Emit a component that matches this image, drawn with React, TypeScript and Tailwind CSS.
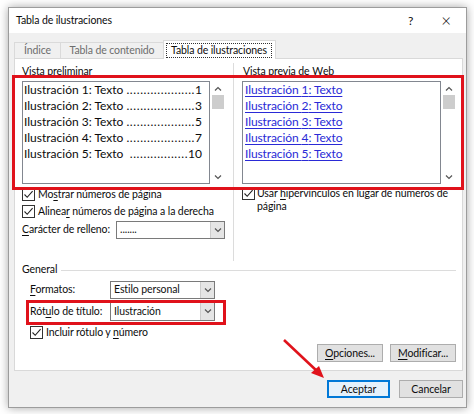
import React from 'react';

const font = { fontFamily: 'Lato, "Noto Sans", sans-serif' };

const Check = () => (
  <span className="w-[13px] h-[13px] border border-[#333333] bg-white flex items-center justify-center shrink-0">
    <svg width="11" height="11" viewBox="0 0 11 11">
      <path d="M1.5 5.5 L4.2 8.3 L9.6 2.2" fill="none" stroke="#222222" strokeWidth="1.1" />
    </svg>
  </span>
);

const Chevron = ({ up = false }: { up?: boolean }) => (
  <svg width="8" height="5" viewBox="0 0 8 5">
    <path d={up ? 'M1 4.5 L4 1.5 L7 4.5' : 'M1 0.5 L4 3.5 L7 0.5'} fill="none" stroke="#555555" strokeWidth="1.2" />
  </svg>
);

const Scrollbar = ({ w }: { w: string }) => (
  <div className={`${w} h-[103px] flex flex-col items-center`}>
    <div className="h-[14px] flex items-center justify-center">
      <Chevron up />
    </div>
    <div className="w-[12px] h-[14px] bg-[#cdcdcd]" />
    <div className="flex-1" />
    <div className="h-[14px] flex items-center justify-center">
      <Chevron />
    </div>
  </div>
);

const Select = ({ value, w, h }: { value: string; w: string; h: string }) => (
  <div className={`${w} ${h} border border-[#7a7a7a] bg-white flex items-stretch`}>
    <span className="flex-1 pl-[3px] flex items-center text-[#111111]">{value}</span>
    <span className="w-[14px] bg-[#e5e5e5] border-l border-[#cccccc] flex items-center justify-center">
      <Chevron />
    </span>
  </div>
);

const U = ({ children }: { children: React.ReactNode }) => <span className="underline underline-offset-2">{children}</span>;

const previews = [
  { n: 1, p: '1', dots: 20 },
  { n: 2, p: '3', dots: 20 },
  { n: 3, p: '5', dots: 20 },
  { n: 4, p: '7', dots: 20 },
  { n: 5, p: '10', dots: 17 },
];

export default function App() {
  return (
    <div
      className="relative w-[474px] h-[414px] bg-white overflow-hidden text-[#0c0c0c] text-[10.5px] tracking-[-0.1px] whitespace-nowrap"
      style={font}
    >
      <div className="ml-[8px] mt-[7px] w-[459px] h-[401px] border border-[#9c9c9c] flex flex-col shadow-[0_0_9px_rgba(0,0,0,0.35)]">
        {/* title bar */}
        <div className="h-[25px] bg-white flex items-center pl-[7px]">
          <span>Tabla de ilustraciones</span>
          <span className="ml-auto mr-[28px] text-[12px]">?</span>
          <span className="mr-[15px] text-[17px] font-light leading-none">×</span>
        </div>

        <div className="flex-1 bg-[#f0f0f0] flex flex-col pl-[5px] pr-[3px]">
          {/* tabs */}
          <div className="pt-[7px] h-[25px] flex items-end">
            <div className="w-[46px] h-[16px] flex items-center justify-center text-[#6d6d6d] border-t border-l border-[#dadada]">Índice</div>
            <div className="w-[103px] h-[16px] flex items-center justify-center text-[#6d6d6d] border-t border-l border-[#dadada]">Tabla de contenido</div>
            <div className="relative z-10 -mb-[1px] w-[113px] h-[19px] bg-white border border-b-0 border-[#d9d9d9] flex items-center pl-[2px]">
              <span className="border border-dotted border-[#333333] px-[4px] leading-[13px]">Tabla de ilustraciones</span>
            </div>
          </div>

          {/* panel */}
          <div className="h-[313px] bg-white border border-[#d9d9d9] flex flex-col">
            <div className="mt-[4px] h-[198px] flex">
              <div className="w-[219px] border-r border-[#dcdcdc] pl-[7px] pt-[1px]">
                <div className="h-[16px] flex items-center"><U>V</U>ista preliminar</div>
                <div className="mt-[1px] flex">
                  <div className="w-[188px] h-[103px] border border-[#828790] pl-[1px] pr-[7px] text-[12px] tracking-normal leading-[16px]">
                    {previews.map((r) => (
                      <div key={r.n} className="flex">
                        <span>Ilustración {r.n}: Texto&nbsp;</span>
                        <span className="flex-1 overflow-hidden text-right tracking-[0.6px]">{'.'.repeat(r.dots)}</span>
                        <span>{r.p}</span>
                      </div>
                    ))}
                  </div>
                  <Scrollbar w="w-[16px]" />
                </div>
                <div className="mt-[2px] h-[17px] flex items-center gap-[3px]">
                  <Check />
                  <span>Mo<U>s</U>trar números de página</span>
                </div>
                <div className="h-[17px] flex items-center gap-[3px]">
                  <Check />
                  <span>Alinea<U>r</U> números de página a la derecha</span>
                </div>
                <div className="mt-[1px] h-[18px] flex items-center">
                  <span className="w-[94px]"><U>C</U>arácter de relleno:</span>
                  <Select value="......." w="w-[109px]" h="h-[18px]" />
                </div>
              </div>

              <div className="flex-1 pl-[8px] pt-[1px]">
                <div className="h-[16px] flex items-center pl-[1px]">Vista previa de&nbsp;<U>W</U>eb</div>
                <div className="mt-[1px] flex">
                  <div className="w-[199px] h-[103px] border border-[#828790] pl-[2px] text-[12px] tracking-[-0.1px] leading-[16px] text-[#2a2ad6]">
                    {previews.map((r) => (
                      <div key={r.n}>
                        <span className="underline underline-offset-2">Ilustración {r.n}: Texto</span>
                      </div>
                    ))}
                  </div>
                  <Scrollbar w="w-[15px]" />
                </div>
                <div className="mt-[3px] flex items-start gap-[2px]">
                  <Check />
                  <span className="leading-[13px]">
                    Usar <U>h</U>ipervínculos en lugar de números de
                    <br />
                    página
                  </span>
                </div>
              </div>
            </div>

            {/* General */}
            <div className="h-[16px] mt-[1px] flex items-center pl-[7px] pr-[6px]">
              <span>General</span>
              <div className="flex-1 ml-[4px] border-t border-[#dcdcdc]" />
            </div>
            <div className="mt-[3px] h-[18px] flex items-center pl-[15px]">
              <span className="w-[80px]"><U>F</U>ormatos:</span>
              <Select value="Estilo personal" w="w-[105px]" h="h-[18px]" />
            </div>
            <div className="mt-[3px] h-[19px] flex items-center pl-[15px]">
              <span className="w-[80px]">Rót<U>u</U>lo de título:</span>
              <Select value="Ilustración" w="w-[105px]" h="h-[19px]" />
            </div>
            <div className="mt-[3px] h-[17px] flex items-center gap-[3px] pl-[15px]">
              <Check />
              <span>Incluir rótulo y <U>n</U>úmero</span>
            </div>

            <div className="mt-auto mb-[8px] pr-[6px] flex justify-end gap-[7px]">
              <button className="w-[66px] h-[18px] bg-[#e1e1e1] border border-[#adadad] leading-none">
                <U>O</U>pciones...
              </button>
              <button className="w-[66px] h-[18px] bg-[#e1e1e1] border border-[#adadad] leading-none">
                <U>M</U>odificar...
              </button>
            </div>
          </div>

          {/* dialog buttons */}
          <div className="pt-[9px] flex justify-end gap-[9px]">
            <button className="w-[63px] h-[18px] bg-[#e5f1fb] border-2 border-[#0078d7] leading-none">Aceptar</button>
            <button className="w-[64px] h-[18px] bg-[#e1e1e1] border border-[#adadad] leading-none">Cancelar</button>
          </div>
        </div>
      </div>

      {/* annotations */}
      <div className="absolute left-[12px] top-[75px] w-[452px] h-[115px] border-[3px] border-[#e0121b]" />
      <div className="absolute left-[26px] top-[300px] w-[200px] h-[25px] border-[3px] border-[#e0121b]" />
      <svg className="absolute left-0 top-0" width="474" height="414" viewBox="0 0 474 414">
        <line x1="284" y1="340" x2="318" y2="372" stroke="#e0121b" strokeWidth="2.5" />
        <polygon points="324,378 311,373 319,366" fill="#e0121b" />
      </svg>
    </div>
  );
}
